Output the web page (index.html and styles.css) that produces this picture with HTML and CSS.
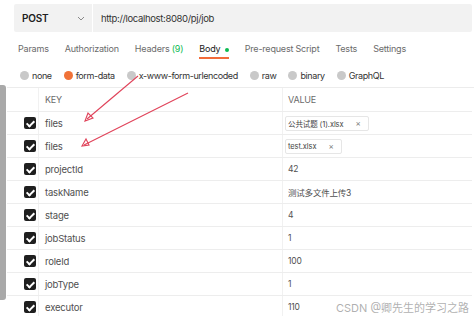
FILE: index.html
```html
<!DOCTYPE html>
<html lang="en">
<head>
  <meta charset="UTF-8">
  <meta name="viewport" content="width=device-width, initial-scale=1.0">
  <title>Postman - form-data</title>
  <link rel="stylesheet" href="styles.css">
</head>
<body>
  <div class="scroll-rail">
    <div class="scroll-thumb"></div>
  </div>

  <div class="workspace">
    <div class="url-bar">
      <div class="method">
        <span>POST</span>
        <svg class="chevron" width="8" height="5" viewBox="0 0 8 5"><path d="M1 1l3 3 3-3" fill="none" stroke="#8a8a8a" stroke-width="1"/></svg>
      </div>
      <div class="url">http://localhost:8080/pj/job</div>
    </div>

    <div class="tabs">
      <span class="tab">Params</span>
      <span class="tab">Authorization</span>
      <span class="tab">Headers <span class="count">(9)</span></span>
      <span class="tab active">Body <i class="dot"></i></span>
      <span class="tab">Pre-request Script</span>
      <span class="tab">Tests</span>
      <span class="tab">Settings</span>
    </div>

    <div class="body-types">
      <label class="radio"><i></i>none</label>
      <label class="radio on"><i></i>form-data</label>
      <label class="radio"><i></i>x-www-form-urlencoded</label>
      <label class="radio"><i></i>raw</label>
      <label class="radio"><i></i>binary</label>
      <label class="radio"><i></i>GraphQL</label>
    </div>

    <div class="params">
      <div class="row head">
        <div class="cell check"></div>
        <div class="cell key">KEY</div>
        <div class="cell value">VALUE</div>
      </div>
      <div class="row">
        <div class="cell check"><span class="box"></span></div>
        <div class="cell key">files</div>
        <div class="cell value"><span class="chip">公共试题 (1).xlsx <b>×</b></span></div>
      </div>
      <div class="row">
        <div class="cell check"><span class="box"></span></div>
        <div class="cell key">files</div>
        <div class="cell value"><span class="chip">test.xlsx <b>×</b></span></div>
      </div>
      <div class="row">
        <div class="cell check"><span class="box"></span></div>
        <div class="cell key">projectId</div>
        <div class="cell value">42</div>
      </div>
      <div class="row">
        <div class="cell check"><span class="box"></span></div>
        <div class="cell key">taskName</div>
        <div class="cell value">测试多文件上传3</div>
      </div>
      <div class="row">
        <div class="cell check"><span class="box"></span></div>
        <div class="cell key">stage</div>
        <div class="cell value">4</div>
      </div>
      <div class="row">
        <div class="cell check"><span class="box"></span></div>
        <div class="cell key">jobStatus</div>
        <div class="cell value">1</div>
      </div>
      <div class="row">
        <div class="cell check"><span class="box"></span></div>
        <div class="cell key">roleId</div>
        <div class="cell value">100</div>
      </div>
      <div class="row">
        <div class="cell check"><span class="box"></span></div>
        <div class="cell key">jobType</div>
        <div class="cell value">1</div>
      </div>
      <div class="row">
        <div class="cell check"><span class="box"></span></div>
        <div class="cell key">executor</div>
        <div class="cell value">110</div>
      </div>
    </div>
  </div>

  <!-- red annotation arrows drawn over the screenshot -->
  <svg class="arrows" width="474" height="316" viewBox="0 0 474 316">
    <g fill="none" stroke="#e0435a" stroke-width="1.1">
      <path d="M138 76 L87 119"/>
      <path d="M85 121 L88 113 L93 118 Z"/>
      <path d="M188 93 L84 145"/>
      <path d="M82 146 L86 139 L89 145 Z"/>
    </g>
  </svg>

  <div class="watermark">CSDN @卿先生的学习之路</div>
</body>
</html>
```

FILE: styles.css
```css
body {
  margin: 0;
  font-family: 'Inter', 'Noto Sans CJK SC', sans-serif;
  font-size: 9px;
  letter-spacing: -0.2px;
  color: #212121;
  background: #fff;
  display: flex;
  height: 316px;
  overflow: hidden;
}

.scroll-rail {
  width: 6px;
  flex-shrink: 0;
}

.scroll-thumb {
  margin-top: 85px;
  height: 215px;
  width: 6px;
  background: #a9a9a9;
  border-radius: 0 3px 3px 0;
}

.workspace {
  flex: 1;
  min-width: 0;
}

/* request line */
.url-bar {
  display: flex;
  align-items: center;
  height: 28px;
  margin: 4px 2px 0 8px;
  background: #f2f2f2;
  border-radius: 2px;
}

.method {
  display: flex;
  align-items: center;
  justify-content: space-between;
  width: 79px;
  height: 100%;
  box-sizing: border-box;
  padding: 0 7px 0 8px;
  border-right: 1px solid #fff;
  font-weight: 600;
  font-size: 10px;
}

.url {
  padding-left: 8px;
  font-size: 9.5px;
  letter-spacing: -0.35px;
  color: #333;
}

/* tabs */
.tabs {
  display: flex;
  gap: 16px;
  height: 28px;
  align-items: center;
  padding: 0 0 0 12px;
  margin-top: 3px;
}

.tab {
  color: #6b6b6b;
  position: relative;
  line-height: 28px;
}

.tab .count {
  color: #0cbb52;
}

.tab.active {
  color: #212121;
}

.tab.active::after {
  content: "";
  position: absolute;
  left: 0;
  right: 0;
  bottom: 4px;
  height: 2px;
  background: #f26b3a;
}

.dot {
  display: inline-block;
  width: 4px;
  height: 4px;
  border-radius: 50%;
  background: #0cbb52;
  vertical-align: middle;
  margin-left: 2px;
}

/* body type radios */
.body-types {
  display: flex;
  align-items: center;
  gap: 12px;
  height: 24px;
  padding-left: 13px;
  border-bottom: 1px solid #ececec;
  margin-left: 1px;
}

.radio {
  display: flex;
  align-items: center;
  gap: 3px;
  color: #333;
  letter-spacing: -0.4px;
}

.radio i {
  width: 9px;
  height: 9px;
  border-radius: 50%;
  background: #c9c9c9;
}

.radio.on i {
  background: #f07238;
}

/* key / value table */
.params {
  margin-left: 1px;
  margin-right: 2px;
}

.row {
  display: grid;
  grid-template-columns: 31px 244px 1fr;
  height: 22px;
  border-bottom: 1px solid #ededed;
}

.row.head {
  height: 23px;
}

.cell {
  display: flex;
  align-items: center;
}

.cell.key {
  border-left: 1px solid #f1f1f1;
  padding-left: 6px;
  color: #505050;
  font-size: 9.5px;
}

.cell.value {
  border-left: 1px solid #f1f1f1;
  padding-left: 5px;
  color: #505050;
  font-size: 8.5px;
}

.head .cell {
  color: #6b6b6b;
  font-size: 9px;
}

.check {
  justify-content: flex-end;
  padding-right: 2px;
}

.box {
  position: relative;
  width: 12px;
  height: 12px;
  border-radius: 2px;
  background: #1f1f1f;
}

.box::after {
  content: "";
  position: absolute;
  left: 4px;
  top: 1.5px;
  width: 3px;
  height: 6px;
  border: solid #fff;
  border-width: 0 2px 2px 0;
  transform: rotate(45deg);
}

.chip {
  display: inline-flex;
  align-items: center;
  justify-content: space-between;
  gap: 12px;
  height: 13px;
  padding: 0 7px 0 2px;
  margin-left: -3px;
  border: 1px solid #e6e6e6;
  border-radius: 2px;
  font-size: 7.5px;
  letter-spacing: -0.1px;
  color: #444;
}

.chip b {
  font-weight: normal;
  font-size: 8px;
  color: #777;
}

.arrows {
  position: absolute;
  left: 0;
  top: 0;
  pointer-events: none;
}

.watermark {
  position: absolute;
  left: 336px;
  top: 299px;
  font-size: 11px;
  letter-spacing: 0;
  color: rgba(150, 150, 150, 0.75);
  white-space: nowrap;
}
```
